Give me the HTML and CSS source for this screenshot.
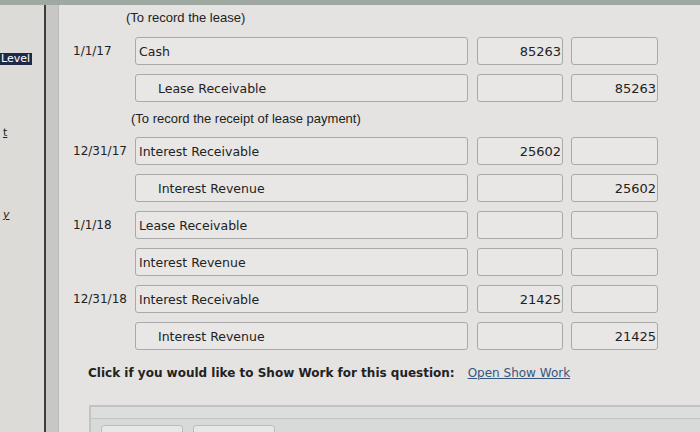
FILE: index.html
```html
<!DOCTYPE html>
<html>
<head>
  <link rel="stylesheet" href="styles.css">
</head>
<body>
  <div class="topbar"></div>
  <div class="screen">
    <aside class="side">
      <span class="side-item sel">Level</span>
      <span class="side-item cut">t</span>
      <span class="side-item cut">y</span>
    </aside>
    <div class="divider"></div>

    <main class="main">
      <p class="note">(To record the lease)</p>
      <div class="entry">
        <span class="date">1/1/17</span>
        <div class="field acct">Cash</div>
        <div class="field num">85263</div>
        <div class="field num"></div>
      </div>
      <div class="entry">
        <span class="date"></span>
        <div class="field acct indent">Lease Receivable</div>
        <div class="field num"></div>
        <div class="field num">85263</div>
      </div>

      <p class="note">(To record the receipt of lease payment)</p>
      <div class="entry">
        <span class="date">12/31/17</span>
        <div class="field acct">Interest Receivable</div>
        <div class="field num">25602</div>
        <div class="field num"></div>
      </div>
      <div class="entry">
        <span class="date"></span>
        <div class="field acct indent">Interest Revenue</div>
        <div class="field num"></div>
        <div class="field num">25602</div>
      </div>
      <div class="entry">
        <span class="date">1/1/18</span>
        <div class="field acct">Lease Receivable</div>
        <div class="field num"></div>
        <div class="field num"></div>
      </div>
      <div class="entry">
        <span class="date"></span>
        <div class="field acct">Interest Revenue</div>
        <div class="field num"></div>
        <div class="field num"></div>
      </div>
      <div class="entry">
        <span class="date">12/31/18</span>
        <div class="field acct">Interest Receivable</div>
        <div class="field num">21425</div>
        <div class="field num"></div>
      </div>
      <div class="entry">
        <span class="date"></span>
        <div class="field acct indent">Interest Revenue</div>
        <div class="field num"></div>
        <div class="field num">21425</div>
      </div>

      <div class="show-work">
        <b>Click if you would like to Show Work for this question:</b>
        <a href="#">Open Show Work</a>
      </div>

      <div class="panel">
        <div class="panel-bar"></div>
        <div class="panel-btns">
          <span class="pbtn"></span>
          <span class="pbtn"></span>
        </div>
      </div>
    </main>
  </div>
</body>
</html>
```

FILE: styles.css
```css
body {
  margin: 0;
  width: 700px;
  height: 432px;
  overflow: hidden;
  background: #e4e3e1;
  font-family: "DejaVu Sans", Verdana, sans-serif;
  color: #222;
}
.topbar {
  height: 5px;
  background: #9fa9a2;
}
.screen {
  display: flex;
  height: 427px;
}
.side {
  width: 44px;
  background: #dddbd8;
  display: flex;
  flex-direction: column;
  overflow: hidden;
  font-size: 11px;
  padding-top: 48px;
}
.side-item {
  display: block;
  line-height: 12px;
}
.sel {
  background: #1f2947;
  color: #fff;
  width: 31px;
  padding-left: 1px;
}
.cut {
  margin-top: 62px;
  padding-left: 3px;
  text-decoration: underline;
}
.cut + .cut {
  margin-top: 70px;
  font-style: italic;
}
.divider {
  width: 12px;
  border-left: 2px solid #3d3d3d;
  border-right: 1px solid #b9b9b7;
  background: #c7c7c5;
}
.main {
  flex: 1;
  display: flex;
  flex-direction: column;
  gap: 9px;
  padding-left: 10px;
}
.note {
  margin: 0;
  font-family: "Liberation Sans", Arial, sans-serif;
  font-size: 13px;
  line-height: 15px;
  padding-left: 57px;
}
.main > .note:first-child {
  margin-top: 5px;
  margin-bottom: 3px;
}
.entry + .note {
  margin: 0 0 2px;
  padding-left: 62px;
}
.entry {
  display: flex;
  align-items: center;
  gap: 9px;
  font-size: 12.5px;
}
.date {
  width: 62px;
  padding-left: 4px;
  margin-right: -9px;
  font-size: 12px;
}
.field {
  height: 28px;
  box-sizing: border-box;
  border: 1px solid #a9a9a9;
  border-radius: 3px;
  background: #e8e7e5;
  display: flex;
  align-items: center;
  padding: 0 3px;
}
.acct {
  width: 333px;
}
.indent {
  padding-left: 22px;
}
.num {
  width: 86px;
  padding-right: 1px;
  justify-content: flex-end;
  font-size: 13px;
}
.num + .num {
  width: 87px;
  margin-left: -1px;
}
.show-work {
  display: flex;
  gap: 13px;
  font-size: 12px;
  line-height: 15px;
  padding-left: 19px;
  margin-top: 7px;
}
.show-work a {
  color: #35577f;
}
.panel {
  margin: 15px 0 0 20px;
  flex: 1;
  border-top: 2px solid #c2c3c2;
  border-left: 2px solid #c2c3c2;
  background: #d8dada;
}
.panel-bar {
  height: 11px;
  border-bottom: 1px solid #c3c5c5;
  background: #dcdedd;
}
.panel-btns {
  display: flex;
  gap: 10px;
  padding: 6px 0 0 10px;
}
.pbtn {
  width: 80px;
  height: 14px;
  border: 1px solid #bbb;
  border-radius: 3px;
  background: #e6e7e7;
}
```
